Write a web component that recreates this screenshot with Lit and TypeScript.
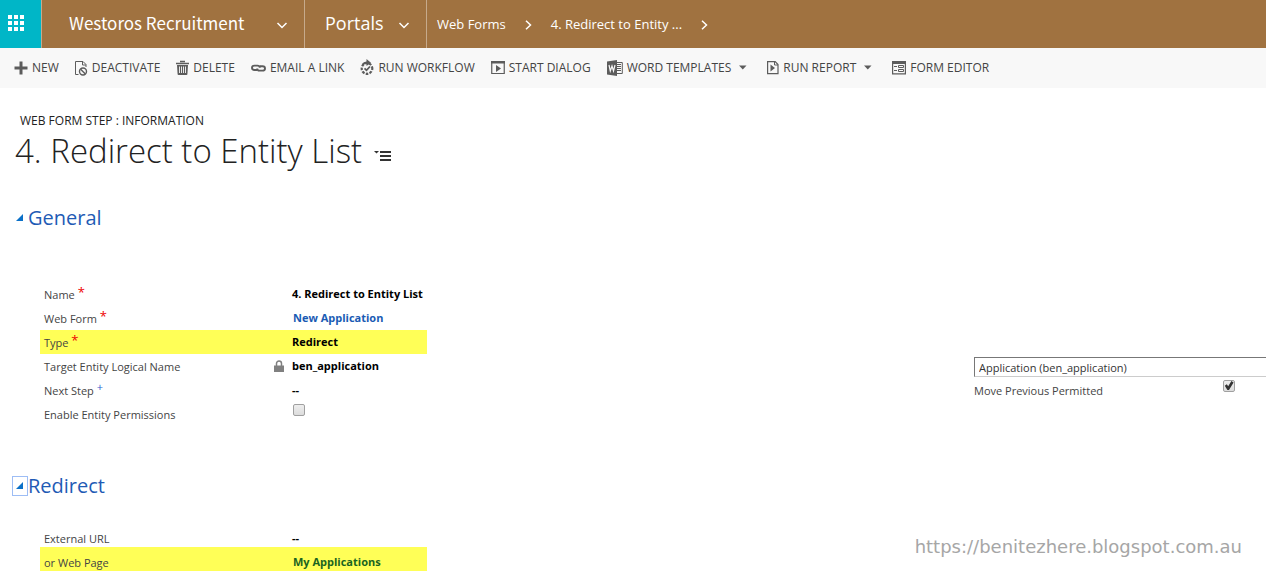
import { LitElement, html, svg, css } from "lit";
import { customElement } from "lit/decorators.js";

const icon = (w: number, h: number, body: unknown) =>
  html`<svg class="icon" width=${w} height=${h} viewBox="0 0 ${w} ${h}" aria-hidden="true">${body}</svg>`;

const G = "#5c5c5c";

const icons = {
  plus: icon(14, 14, svg`<path d="M5.500 .5h3v5H13.500v3H8.500V13.500h-3V8.500H.5v-3h5z" fill=${G}/>`),
  deactivate: icon(13, 16, svg`<g fill="none" stroke=${G}>
    <path d="M3.500 14.500H.5V1.500H8l3 3V7M7.500 1.500v3.500H11"/><circle cx="8" cy="11.500" r="3.500" stroke-width="1.400"/><path d="M5.600 9.200l4.800 4.800" stroke-width="1.400"/></g>`),
  trash: icon(13, 16, svg`<path d="M4 1.500h5M0 3.500h13" stroke=${G} stroke-width="1.300"/>
    <path d="M1 5h11l-.6 9.200c0 .5-.4.8-.9.800h-8c-.5 0-.9-.3-.9-.8z" fill=${G}/>
    <path d="M3.500 6.500V13M5.500 6.500V13M7.500 6.500V13M9.500 6.500V13" stroke="#f8f8f8" stroke-width=".9"/>`),
  link: icon(15, 10, svg`<path d="M6 7H3.500a2.500 2.200 0 0 1 0-4.400h3c1.500 0 2.300 1 2.300 2.200M9 3.200h2.500a2.500 2.200 0 0 1 0 4.400h-3C7 7.600 6.200 6.600 6.200 5.400" fill="none" stroke=${G} stroke-width="1.900"/>`),
  workflow: icon(14, 17, svg`<g fill="none" stroke=${G}>
    <path d="M2.500 5.800A5.300 5.300 0 0 1 8 3.600" stroke-width="2"/>
    <circle cx="7" cy="9.500" r="5.300" stroke-width="2.200" stroke-dasharray="2.600 1.300" stroke-dashoffset="1"/>
    <path d="M4.500 9.300l2 2 3.500-3.800" stroke-width="1.800"/></g><path d="M6.500 0l4.500 3.700L6.500 7z" fill=${G}/>`),
  dialog: icon(14, 13, svg`<path d="M.75.500h12.500v12H.75z" fill="none" stroke=${G} stroke-width="1.200"/><path d="M0 0h14v2.500H0z" fill=${G}/><path d="M5 4l5 3.500L5 11z" fill=${G}/>`),
  word: icon(16, 16, svg`<path d="M0 1.500L10 0v16L0 14.500z" fill=${G}/>
    <path d="M10 2.500h5.300v11H10" fill="none" stroke=${G}/><path d="M10 4.500h4M10 6.500h4M10 8.500h4M10 10.500h4" stroke=${G}/>
    <path d="M2 5l1.300 6L5 6l1.500 5L8 5" fill="none" stroke="#f8f8f8" stroke-width="1.200"/>`),
  report: icon(12, 15, svg`<path d="M.6 1.600h7.600l2.800 3v9H.6z" fill="none" stroke=${G} stroke-width="1.200"/><path d="M7.500 1.500V5H11" fill="none" stroke=${G}/><path d="M3.500 4.500L8 8l-4.500 3.500z" fill=${G}/>`),
  form: icon(14, 14, svg`<path d="M.6.600h12.800v12.300H.6z" fill="none" stroke=${G} stroke-width="1.200"/><path d="M0 0h14v3H0z" fill=${G}/>
    <path d="M2 5.500h3M2 9.500h3" stroke=${G}/><path d="M6.500 4.500h5v2h-5zM6.500 8.500h5v2h-5z" fill="none" stroke=${G}/>`),
};

const chevronDown = icon(12, 7, svg`<path d="M1.500 1l4.500 4.500L10.500 1" fill="none" stroke="#fff" stroke-width="1.500"/>`);
const chevronRight = icon(7, 10, svg`<path d="M1 .7L5.500 5 1 9.300" fill="none" stroke="#fff" stroke-width="1.500"/>`);
const caret = icon(8, 5, svg`<path d="M0 .5h7.500L3.800 4.500z" fill=${G}/>`);
const fold = icon(7, 7, svg`<path d="M7 0v7H0z" fill="#0a70c8"/>`);
const lock = icon(10, 13, svg`<path d="M2.500 6V3.500a2.500 2.500 0 0 1 5 0V6" fill="none" stroke="#808080" stroke-width="1.500"/><path d="M0 5.500h10v6.500H0z" fill="#808080"/>`);

const commands: { label: string; icon: unknown; menu?: boolean }[] = [
  { label: "NEW", icon: icons.plus },
  { label: "DEACTIVATE", icon: icons.deactivate },
  { label: "DELETE", icon: icons.trash },
  { label: "EMAIL A LINK", icon: icons.link },
  { label: "RUN WORKFLOW", icon: icons.workflow },
  { label: "START DIALOG", icon: icons.dialog },
  { label: "WORD TEMPLATES", icon: icons.word, menu: true },
  { label: "RUN REPORT", icon: icons.report, menu: true },
  { label: "FORM EDITOR", icon: icons.form },
];

@customElement("app-root")
export class AppRoot extends LitElement {
  static styles = css`
    :host {
      display: block;
      min-height: 100vh;
      overflow: hidden;
      position: relative;
      background: #fff;
      color: #000;
      font: 11px/16px "Segoe UI", "Open Sans", "Noto Sans", sans-serif;
    }
    * { box-sizing: border-box; }
    button { font: inherit; color: inherit; background: none; border: 0; padding: 0; margin: 0; }
    a { text-decoration: none; color: inherit; }
    .icon { display: block; flex: none; }
    .top { display: flex; height: 48px; background: #a07240; color: #fff; }
    .launcher { display: flex; align-items: center; width: 42px; background: #00b6c7; border-right: 1px solid #c6aa8c; padding: 0 8px 2px; }
    .tab { display: flex; align-items: center; justify-content: space-between; border-right: 1px solid #c6aa8c; padding-bottom: 2px; }
    .tab .icon { margin-top: 5px; }
    .brand { width: 263px; padding-left: 27px; padding-right: 16px; font-family: "Noto Sans CJK SC", sans-serif; font-size: 17px; }
    .area { width: 122px; padding-left: 20px; padding-right: 16px; font-size: 18px; }
    .crumbs { display: flex; align-items: center; gap: 19px; padding-left: 10px; font-size: 13px; }
    .crumbs .icon { margin-top: 2px; }
    .bar { display: flex; align-items: center; gap: 16px; height: 40px; padding: 0 0 1px 14px; background: #f8f8f8; color: #444; white-space: nowrap; font-size: 12px; }
    .cmd { display: flex; align-items: center; gap: 4px; }
    .cmd .menu { margin: 0 4px; }
    .head { padding: 25px 0 0 20px; line-height: 16px; }
    .kind { margin: 0; color: #222; font-size: 12px; }
    .title { display: flex; align-items: center; gap: 12px; margin: 0 0 0 -5px; font-size: 33px; line-height: 44px; font-weight: 300; color: #222; }
    .title button { padding-top: 9px; }
    .section { padding-left: 12px; }
    .section h2 { display: flex; align-items: center; margin: 0; height: 24px; font-size: 20px; font-weight: 400; color: #1f5bb5; }
    .fold { display: flex; align-items: center; width: 16px; height: 20px; padding: 0 0 2px 4px; }
    .focus { outline: 1px solid #9dbdf5; outline-offset: -1px; }
    .general { padding-top: 33px; }
    .redirect { padding-top: 48px; }
    .cols { display: grid; grid-template-columns: 1fr 292px; padding-left: 28px; }
    .general .cols { padding-top: 52px; }
    .redirect .cols { padding-top: 25px; }
    .row { display: grid; grid-template-columns: 230px 18px 1fr; width: 387px; height: 24px; padding-left: 4px; align-items: center; }
    .hl { background: #ffff57; }
    .label { color: #444; padding-top: 2px; }
    .redirect .label { padding-top: 7px; }
    .redirect .val { padding-top: 5px; }
    .val { font-weight: 700; }
    .link { color: #1a5bb4; padding-left: 1px; }
    .green { color: #1a6420; }
    .req { color: #e00; font-size: 13px; line-height: 8px; vertical-align: 2px; }
    .rec { color: #2a5bd0; font-size: 11px; line-height: 8px; vertical-align: 4px; }
    .side { padding-top: 75px; }
    .entity { display: block; width: 320px; height: 20px; border: 1px solid #ccc; border-top-color: #777; border-left-color: #777; padding: 0 4px; font: inherit; color: #333; background: #fff; border-radius: 0; outline: 0; }
    .move { display: flex; height: 24px; justify-content: space-between; align-items: center; padding-top: 3px; padding-right: 31px; color: #444; }
    .move .check { margin-bottom: 10px; }
    .check { appearance: none; display: block; width: 12px; height: 12px; margin: 0 0 0 1px; border: 1px solid #a0a0a0; border-radius: 2px; background: linear-gradient(#eee, #dcdcdc); }
    .row .check { margin-bottom: 8px; }
    .check:checked::before { content: ""; display: block; width: 10px; height: 10px; background: #333; clip-path: polygon(8% 52%, 28% 38%, 42% 58%, 74% 6%, 96% 20%, 50% 94%, 34% 94%); }
    .mark { position: absolute; right: 24px; bottom: 18px; font: 18px/24px "DejaVu Sans", sans-serif; color: #a6a6a6; }
  `;

  render() {
    return html`
      <header class="top">
        <button class="launcher" aria-label="Apps">
          ${icon(16, 16, [0, 6, 12].map((y) => [0, 6, 12].map((x) => svg`<rect x=${x} y=${y} width="4" height="4" fill="#fff"/>`)))}
        </button>
        <button class="tab brand">Westoros Recruitment ${chevronDown}</button>
        <button class="tab area">Portals ${chevronDown}</button>
        <nav class="crumbs">
          <a href="#">Web Forms</a>${chevronRight}<a href="#">4. Redirect to Entity ...</a>${chevronRight}
        </nav>
      </header>
      <div class="bar" role="toolbar">
        ${commands.map((c) => html`<button class="cmd">${c.icon}<span>${c.label}</span>${c.menu ? html`<span class="menu">${caret}</span>` : ""}</button>`)}
      </div>
      <main>
        <div class="head">
          <p class="kind">WEB FORM STEP : INFORMATION</p>
          <h1 class="title">4. Redirect to Entity List
            <button aria-label="Switch form">${icon(18, 12, svg`<path d="M0 1h5L2.500 3.500z" fill="#333"/><path d="M6 2h11M6 6h11M6 10h11" stroke="#333" stroke-width="2"/>`)}</button>
          </h1>
        </div>
        <section class="section general">
          <h2><button class="fold" aria-label="Collapse General">${fold}</button>General</h2>
          <div class="cols">
            <div>
              <div class="row"><span class="label">Name <span class="req">*</span></span><span></span><span class="val">4. Redirect to Entity List</span></div>
              <div class="row"><span class="label">Web Form <span class="req">*</span></span><span></span><span class="val"><a class="link" href="#">New Application</a></span></div>
              <div class="row hl"><span class="label">Type <span class="req">*</span></span><span></span><span class="val">Redirect</span></div>
              <div class="row"><span class="label">Target Entity Logical Name</span>${lock}<span class="val">ben_application</span></div>
              <div class="row"><span class="label">Next Step <span class="rec">+</span></span><span></span><span class="val">--</span></div>
              <div class="row"><label class="label" for="perm">Enable Entity Permissions</label><span></span><span class="val"><input class="check" id="perm" type="checkbox" /></span></div>
            </div>
            <div class="side">
              <input class="entity" type="text" aria-label="Target entity" .value=${"Application (ben_application)"} />
              <div class="move"><label for="move">Move Previous Permitted</label><input class="check" id="move" type="checkbox" checked /></div>
            </div>
          </div>
        </section>
        <section class="section redirect">
          <h2><button class="fold focus" aria-label="Collapse Redirect">${fold}</button>Redirect</h2>
          <div class="cols">
            <div>
              <div class="row"><span class="label">External URL</span><span></span><span class="val">--</span></div>
              <div class="row hl"><span class="label">or Web Page</span><span></span><span class="val"><a class="link green" href="#">My Applications</a></span></div>
            </div>
          </div>
        </section>
      </main>
      <a class="mark" href="https://benitezhere.blogspot.com.au">https://benitezhere.blogspot.com.au</a>
    `;
  }
}
